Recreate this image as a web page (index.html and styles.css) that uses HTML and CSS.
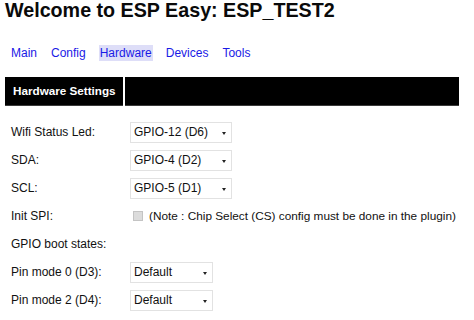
FILE: index.html
```html
<!DOCTYPE html>
<html>
<head>
<meta charset="utf-8">
<title>ESP Easy</title>
<link rel="stylesheet" href="styles.css">
</head>
<body>
<div class="page">
  <h1 class="title">Welcome to ESP Easy: ESP_TEST2</h1>
  <nav class="menu">
    <a class="menu-link" href="#">Main</a>
    <a class="menu-link" href="#">Config</a>
    <a class="menu-link active" href="#">Hardware</a>
    <a class="menu-link" href="#">Devices</a>
    <a class="menu-link" href="#">Tools</a>
  </nav>
  <div class="bar">
    <div class="bar-cell bar-title">Hardware Settings</div>
    <div class="bar-cell"></div>
  </div>
  <div class="form">
    <div class="label">Wifi Status Led:</div>
    <div class="field"><span class="sel wide">GPIO-12 (D6)</span></div>

    <div class="label">SDA:</div>
    <div class="field"><span class="sel wide">GPIO-4 (D2)</span></div>

    <div class="label">SCL:</div>
    <div class="field"><span class="sel wide">GPIO-5 (D1)</span></div>

    <div class="label">Init SPI:</div>
    <div class="field"><span class="check"></span><span class="note">(Note : Chip Select (CS) config must be done in the plugin)</span></div>

    <div class="label span2">GPIO boot states:</div>

    <div class="label">Pin mode 0 (D3):</div>
    <div class="field"><span class="sel narrow">Default</span></div>

    <div class="label">Pin mode 2 (D4):</div>
    <div class="field"><span class="sel narrow">Default</span></div>
  </div>
</div>
</body>
</html>
```

FILE: styles.css
```css
html, body {
  margin: 0;
  padding: 0;
  background: #ffffff;
}

body {
  font-family: "Liberation Sans", Arial, sans-serif;
  font-size: 12px;
  color: #111111;
}

.page {
  padding: 0 15px 0 5px;
}

.title {
  margin: 0;
  font-size: 19.7px;
  line-height: 20px;
  font-weight: bold;
  color: #0a0a0a;
}

.menu {
  display: flex;
  gap: 12px;
  margin-top: 25px;
  padding-left: 5px;
}

.menu-link {
  display: inline-block;
  padding: 0 1px;
  line-height: 16px;
  height: 16px;
  color: #1a1ae6;
  text-decoration: none;
  font-size: 12px;
}

.menu-link.active {
  background: #dedef8;
}

.bar {
  display: grid;
  grid-template-columns: 118px 1fr;
  gap: 2px;
  margin-top: 16px;
  height: 28px;
}

.bar-cell {
  background: #000000;
  border-bottom: 1px solid #3a3a3a;
}

.bar-title {
  color: #ffffff;
  font-weight: bold;
  font-size: 11.7px;
  line-height: 28px;
  padding-left: 8px;
  white-space: nowrap;
}

.form {
  display: grid;
  grid-template-columns: 125px 1fr;
  grid-auto-rows: 28px;
  align-items: center;
  margin-top: 13px;
}

.label {
  padding-left: 6px;
  white-space: nowrap;
}

.span2 {
  grid-column: 1 / 3;
}

.field {
  display: flex;
  align-items: center;
}

.sel {
  position: relative;
  box-sizing: border-box;
  display: inline-block;
  height: 21px;
  line-height: 19px;
  padding-left: 3px;
  border: 1px solid #e2e2e2;
  background: #ffffff;
  color: #111111;
}

.sel::after {
  content: "";
  position: absolute;
  right: 5px;
  top: 9px;
  border-left: 2.5px solid transparent;
  border-right: 2.5px solid transparent;
  border-top: 3px solid #222222;
}

.sel.wide {
  width: 102px;
}

.sel.narrow {
  width: 83px;
}

.check {
  box-sizing: border-box;
  display: inline-block;
  width: 10px;
  height: 10px;
  margin-left: 3px;
  border: 1px solid #c4c4c4;
  background: #dcdcdc;
}

.note {
  margin-left: 6px;
  font-size: 11.8px;
  white-space: nowrap;
}
```
